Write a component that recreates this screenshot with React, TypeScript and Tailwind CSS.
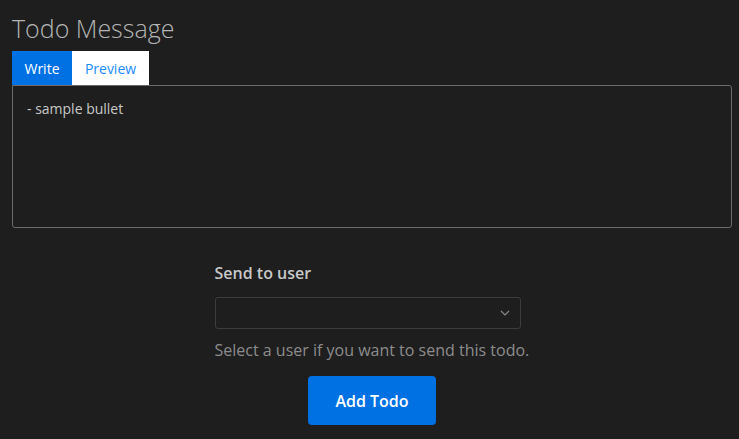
import { useState } from "react";

const App = () => {
    const [tab, setTab] = useState<"write" | "preview">("write");

    return (
        <div className="min-h-screen w-full bg-[#1e1e1e] pt-[12px] font-['Open_Sans',sans-serif] text-[#c8c8c8]">
            <div className="pl-3 pr-[7px]">
                <h1 className="text-[25px] font-light leading-[32px] text-[#b4b4b4]">Todo Message</h1>
                <div className="mt-[7px] flex">
                    <button
                        className={`h-[34px] w-[60px] text-[14px] ${tab === "write" ? "bg-[#0071e3] text-white" : "bg-white text-[#1a8cff]"}`}
                        onClick={() => setTab("write")}
                    >
                        Write
                    </button>
                    <button
                        className={`h-[34px] w-[77px] text-[14px] ${tab === "preview" ? "bg-[#0071e3] text-white" : "bg-white text-[#1a8cff]"}`}
                        onClick={() => setTab("preview")}
                    >
                        Preview
                    </button>
                </div>
                <div className="h-[143px] rounded-b-[3px] rounded-tr-[3px] border border-[#6a6a6a] px-[14px] py-[13px] text-[14px] leading-[20px] text-[#c8c8c8]">
                    - sample bullet
                </div>
            </div>

            <div className="mt-[34px] flex justify-center pr-[4px]">
                <div className="flex w-[306px] flex-col">
                    <label className="text-[16px] font-semibold leading-[22px] text-[#c8c8c8]">Send to user</label>
                    <div className="relative mt-[13px] h-[32px] rounded-[3px] border border-[#3c3c3c]">
                        <svg
                            className="absolute right-[10px] top-[11px]"
                            width="10"
                            height="8"
                            viewBox="0 0 10 8"
                            fill="none"
                            stroke="#8a8a8a"
                            strokeWidth="1.2"
                        >
                            <path d="M1 2l4 4 4-4" />
                        </svg>
                    </div>
                    <p className="mt-[10px] whitespace-nowrap text-[16px] leading-[22px] text-[#8c8c8c]">
                        Select a user if you want to send this todo.
                    </p>
                    <div className="mt-[15px] flex justify-center">
                        <button className="ml-[9px] h-[49px] w-[128px] rounded-[4px] bg-[#0071e3] text-[16px] font-semibold text-white">
                            Add Todo
                        </button>
                    </div>
                </div>
            </div>
        </div>
    );
};

export default App;
